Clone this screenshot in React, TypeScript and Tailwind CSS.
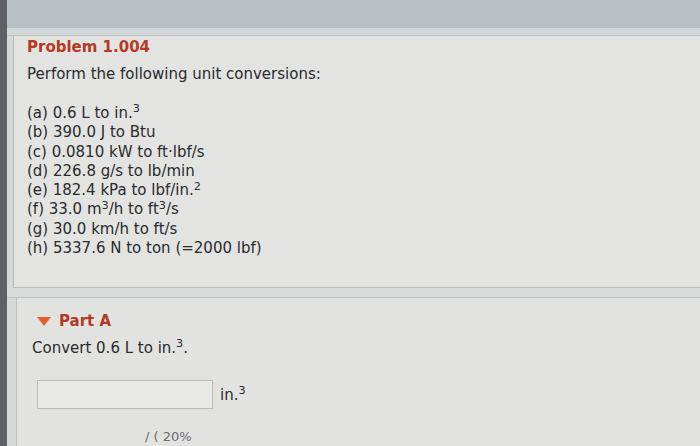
export default function App() {
  const items: React.ReactNode[] = [
    <>(a) 0.6 L to in.<sup>3</sup></>,
    <>(b) 390.0 J to Btu</>,
    <>(c) 0.0810 kW to ft·lbf/s</>,
    <>(d) 226.8 g/s to lb/min</>,
    <>(e) 182.4 kPa to lbf/in.<sup>2</sup></>,
    <>(f) 33.0 m<sup>3</sup>/h to ft<sup>3</sup>/s</>,
    <>(g) 30.0 km/h to ft/s</>,
    <>(h) 5337.6 N to ton (=2000 lbf)</>,
  ]

  return (
    <div className="w-[700px] h-[446px] overflow-hidden flex bg-[#d7d9d9] font-['DejaVu_Sans',sans-serif] text-[15px] text-[#2a2b2d]">
      <div className="w-[7px] shrink-0 bg-[#5d6163]" />
      <div className="flex-1 flex flex-col">
        <div className="h-[28px] shrink-0 bg-[#b9c0c3]" />
        <div className="h-[8px] shrink-0 bg-[#d5d8d9] border-b border-[#bcc0c2]" />

        {/* problem statement */}
        <div className="ml-[6px] h-[252px] shrink-0 border-l border-b border-[#b6babb] bg-[#e3e4e2] pl-[13px] pt-[1px]">
          <div className="font-bold text-[#b8391f] leading-[20px]">Problem 1.004</div>
          <div className="mt-[7px] leading-[20px]">Perform the following unit conversions:</div>
          <ul className="mt-[20px] leading-[19.3px]">
            {items.map((it, i) => (
              <li key={i}>{it}</li>
            ))}
          </ul>
        </div>

        <div className="h-[10px] shrink-0 bg-[#dadcdc] border-b border-[#c0c3c4]" />

        {/* part A */}
        <div className="ml-[9px] flex-1 border-l border-[#bdc0c1] bg-[#e2e3e1] pl-[20px] pt-[13px]">
          <div className="flex items-center gap-[8px] leading-[20px]">
            <svg width="14" height="10" viewBox="0 0 14 10">
              <path d="M0 1 L14 1 L7 10 Z" fill="#e2622b" />
            </svg>
            <span className="font-bold text-[#b33a22]">Part A</span>
          </div>
          <div className="mt-[7px] -ml-[5px] leading-[20px]">
            Convert 0.6 L to in.<sup>3</sup>.
          </div>
          <div className="mt-[22px] flex items-center gap-[7px]">
            <div className="w-[176px] h-[29px] border border-[#b8bbbb] bg-[#e9eae8]" />
            <span className="leading-[20px]">
              in.<sup>3</sup>
            </span>
          </div>
          <div className="mt-[20px] ml-[108px] text-[13px] leading-[16px] text-[#6a6c6e]">/ ( 20%</div>
        </div>
      </div>
    </div>
  )
}
